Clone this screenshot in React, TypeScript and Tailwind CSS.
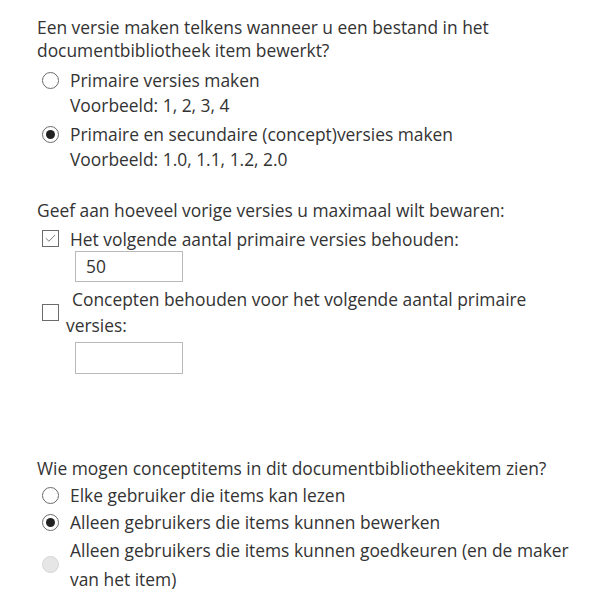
import { Check } from 'lucide-react'

function Radio({ checked, disabled }: { checked?: boolean; disabled?: boolean }) {
  if (disabled) {
    return <span className="block w-[17px] h-[17px] rounded-full bg-[#e6e6e6] border border-[#d6d6d6] shrink-0" />
  }
  return (
    <span className="flex items-center justify-center w-[17px] h-[17px] rounded-full border border-[#6b6b6b] bg-white shrink-0">
      {checked && <span className="block w-[9px] h-[9px] rounded-full bg-[#222]" />}
    </span>
  )
}

function Checkbox({ checked }: { checked?: boolean }) {
  return (
    <span className="flex items-center justify-center w-[17px] h-[17px] border border-[#6b6b6b] bg-white shrink-0">
      {checked && <Check size={13} strokeWidth={1.3} className="text-[#444]" />}
    </span>
  )
}

export default function App() {
  return (
    <div className="min-h-[612px] bg-white text-[#333] text-[17.4px] leading-[23px] pl-[37px] pt-[16px]" style={{ fontFamily: '"Open Sans", "Noto Sans", sans-serif' }}>
      <p className="w-[530px]">Een versie maken telkens wanneer u een bestand in het documentbibliotheek item bewerkt?</p>

      <div className="mt-[7px] flex flex-col gap-[6px]">
        <div className="flex gap-[11px] pl-[5px]">
          <div className="pt-[3px]"><Radio /></div>
          <div className="flex flex-col gap-[2px]">
            <span>Primaire versies maken</span>
            <span>Voorbeeld: 1, 2, 3, 4</span>
          </div>
        </div>
        <div className="flex gap-[11px] pl-[5px]">
          <div className="pt-[3px]"><Radio checked /></div>
          <div className="flex flex-col gap-[2px]">
            <span>Primaire en secundaire (concept)versies maken</span>
            <span>Voorbeeld: 1.0, 1.1, 1.2, 2.0</span>
          </div>
        </div>
      </div>

      <p className="mt-[28px]">Geef aan hoeveel vorige versies u maximaal wilt bewaren:</p>

      <div className="mt-[6px] flex gap-[11px] pl-[5px] items-start">
        <div className="pt-[2px]"><Checkbox checked /></div>
        <span>Het volgende aantal primaire versies behouden:</span>
      </div>
      <div className="ml-[38px] w-[108px] h-[31px] border border-[#b9b9b9] flex items-center pl-[10px]">50</div>

      <div className="mt-[4px] flex gap-[7px] pl-[5px] items-center">
        <Checkbox />
        <div className="leading-[26px]">
          <div className="pl-[6px]">Concepten behouden voor het volgende aantal primaire</div>
          <div>versies:</div>
        </div>
      </div>
      <div className="ml-[38px] mt-[4px] w-[108px] h-[32px] border border-[#b9b9b9]" />

      <p className="mt-[83px]">Wie mogen conceptitems in dit documentbibliotheekitem zien?</p>

      <div className="mt-[4px] flex flex-col gap-[4px]">
        <div className="flex gap-[11px] pl-[5px] items-center">
          <Radio />
          <span>Elke gebruiker die items kan lezen</span>
        </div>
        <div className="flex gap-[11px] pl-[5px] items-center">
          <Radio checked />
          <span>Alleen gebruikers die items kunnen bewerken</span>
        </div>
      </div>
      <div className="mt-[2px] flex gap-[11px] pl-[5px] items-center">
        <Radio disabled />
        <span className="leading-[28.5px]">Alleen gebruikers die items kunnen goedkeuren (en de maker<br />van het item)</span>
      </div>
    </div>
  )
}
